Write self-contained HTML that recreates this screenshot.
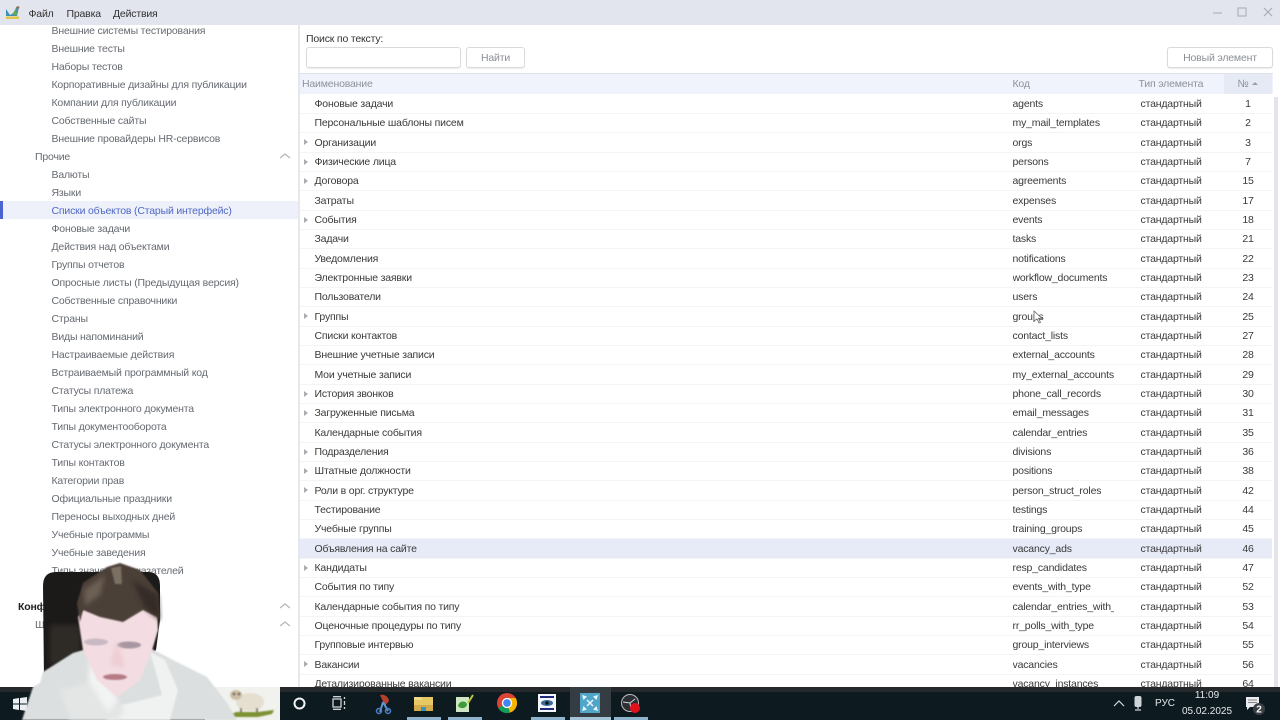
<!DOCTYPE html>
<html lang="ru"><head><meta charset="utf-8"><title>Списки объектов</title>
<style>
html,body{margin:0;padding:0;width:1280px;height:720px;overflow:hidden;background:#fff}
body{position:relative;font-family:"Liberation Sans","DejaVu Sans",sans-serif;font-size:10.5px;letter-spacing:-.18px;color:#333}
.a{position:absolute;white-space:nowrap}
.s{position:absolute;left:51.5px;color:#666b72;white-space:nowrap;line-height:14px;margin-top:.5px}
.r{position:absolute;left:300px;width:972px;height:19.4px;border-bottom:1px solid #f3f4f6;box-sizing:border-box}
.r span{position:absolute;top:2.5px;line-height:14px;white-space:nowrap;color:#3a3a3a}
.n{left:14.5px}.c{left:712.5px;max-width:101px;overflow:hidden}.t{left:840.5px}.d{left:900px;width:96px;text-align:center}
.r i{position:absolute;left:3.5px;top:6px;width:0;height:0;border-left:4px solid #a8adb3;border-top:3px solid transparent;border-bottom:3px solid transparent}
.btn{position:absolute;box-sizing:border-box;border:1px solid #d8dadd;border-radius:3px;background:#fff;color:#8a8e94;text-align:center;box-shadow:0 1px 1px #eee}
svg{position:absolute;overflow:visible}
.k{letter-spacing:0}
</style></head><body>

<!-- title bar -->
<div class="a" style="left:0;top:0;width:1280px;height:25px;background:#e2e5ee"></div>
<svg style="left:4px;top:5px" width="18" height="16"><path d="M2 4l4 6 5-3 1-5 3 0-2 9H2z" fill="#3e8fb8"/><path d="M8 10l4-7 1 7z" fill="#6aa84f"/><circle cx="14" cy="2.500" r="1.400" fill="#b56a3a"/><rect x="2" y="11.500" width="13" height="2.500" fill="#e4c44a"/></svg>
<div class="a" style="left:28.500px;top:7px;line-height:14px;color:#333">Файл</div>
<div class="a" style="left:66.500px;top:7px;line-height:14px;color:#333">Правка</div>
<div class="a" style="left:113px;top:7px;line-height:14px;color:#333">Действия</div>
<svg style="left:1212px;top:6px" width="62" height="12" fill="none" stroke="#a5a9b2" stroke-width="1"><path d="M1 7h9"/><rect x="26" y="2" width="8" height="8"/><path d="M52 2l8 8M60 2l-8 8"/></svg>

<!-- sidebar -->
<div class="a" style="left:298px;top:25px;width:2px;height:662px;background:#e6e8ed"></div>
<div class="s" style="top:23px">Внешние системы тестирования</div>
<div class="s" style="top:41px">Внешние тесты</div>
<div class="s" style="top:59px">Наборы тестов</div>
<div class="s" style="top:77px">Корпоративные дизайны для публикации</div>
<div class="s" style="top:95px">Компании для публикации</div>
<div class="s" style="top:113px">Собственные сайты</div>
<div class="s" style="top:131px">Внешние провайдеры HR-сервисов</div>
<div class="s" style="top:149px;left:35px">Прочие</div>
<svg style="left:279px;top:152px" width="12" height="8" fill="none" stroke="#b5b8bd" stroke-width="1.300"><path d="M1 6l5-4 5 4"/></svg>
<div class="s" style="top:167px">Валюты</div>
<div class="s" style="top:185px">Языки</div>
<div class="a" style="left:0;top:201px;width:298px;height:18px;background:#eef1fa"></div>
<div class="a" style="left:0;top:201px;width:3px;height:18px;background:#4a63d0"></div>
<div class="s" style="top:203px;color:#4f68c4">Списки объектов (Старый интерфейс)</div>
<div class="s" style="top:221px">Фоновые задачи</div>
<div class="s" style="top:239px">Действия над объектами</div>
<div class="s" style="top:257px">Группы отчетов</div>
<div class="s" style="top:275px">Опросные листы (Предыдущая версия)</div>
<div class="s" style="top:293px">Собственные справочники</div>
<div class="s" style="top:311px">Страны</div>
<div class="s" style="top:329px">Виды напоминаний</div>
<div class="s" style="top:347px">Настраиваемые действия</div>
<div class="s" style="top:365px">Встраиваемый программный код</div>
<div class="s" style="top:383px">Статусы платежа</div>
<div class="s" style="top:401px">Типы электронного документа</div>
<div class="s" style="top:419px">Типы документооборота</div>
<div class="s" style="top:437px">Статусы электронного документа</div>
<div class="s" style="top:455px">Типы контактов</div>
<div class="s" style="top:473px">Категории прав</div>
<div class="s" style="top:491px">Официальные праздники</div>
<div class="s" style="top:509px">Переносы выходных дней</div>
<div class="s" style="top:527px">Учебные программы</div>
<div class="s" style="top:545px">Учебные заведения</div>
<div class="s" style="top:563px">Типы значений показателей</div>
<div class="s" style="top:599px;left:18px;color:#222;font-weight:bold">Конфигурация</div>
<div class="s" style="top:617px;left:35px">Шаблоны</div>
<svg style="left:279px;top:602px" width="12" height="8" fill="none" stroke="#b5b8bd" stroke-width="1.300"><path d="M1 6l5-4 5 4"/></svg>
<svg style="left:279px;top:620px" width="12" height="8" fill="none" stroke="#b5b8bd" stroke-width="1.300"><path d="M1 6l5-4 5 4"/></svg>

<!-- search -->
<div class="a" style="left:306px;top:31.500px;line-height:14px;color:#333">Поиск по тексту:</div>
<div class="btn" style="left:306px;top:47px;width:155px;height:21px"></div>
<div class="btn" style="left:466px;top:47px;width:59px;height:21px;line-height:20px">Найти</div>
<div class="btn" style="left:1167px;top:47px;width:106px;height:21px;line-height:20px">Новый элемент</div>

<!-- table header -->
<div class="a" style="left:300px;top:73px;width:973px;height:1px;background:#dfe2e8"></div>
<div class="a" style="left:300px;top:74px;width:973px;height:20px;background:#f0f3fb"></div>
<div class="a" style="left:1224px;top:74px;width:48px;height:20px;background:#e6eaf4"></div>
<div class="a" style="left:302px;top:77px;line-height:14px;color:#8d929b">Наименование</div>
<div class="a" style="left:1012.500px;top:77px;line-height:14px;color:#8d929b">Код</div>
<div class="a" style="left:1138.500px;top:77px;line-height:14px;color:#8d929b">Тип элемента</div>
<div class="a" style="left:1237.500px;top:77px;line-height:14px;color:#8d929b">№</div>
<div class="a" style="left:1252px;top:82px;width:0;height:0;border-left:3.500px solid transparent;border-right:3.500px solid transparent;border-bottom:3.500px solid #9a9ea6"></div>
<div class="a" style="left:1274px;top:97px;width:4px;height:590px;background:#e3e5ea"></div>

<!-- rows -->
<div class="r" style="top:94.500px"><span class="n">Фоновые задачи</span><span class="c">agents</span><span class="t">стандартный</span><span class="d">1</span></div>
<div class="r" style="top:113.800px"><span class="n">Персональные шаблоны писем</span><span class="c">my_mail_templates</span><span class="t">стандартный</span><span class="d">2</span></div>
<div class="r" style="top:133.200px"><i></i><span class="n">Организации</span><span class="c">orgs</span><span class="t">стандартный</span><span class="d">3</span></div>
<div class="r" style="top:152.500px"><i></i><span class="n">Физические лица</span><span class="c">persons</span><span class="t">стандартный</span><span class="d">7</span></div>
<div class="r" style="top:171.800px"><i></i><span class="n">Договора</span><span class="c">agreements</span><span class="t">стандартный</span><span class="d">15</span></div>
<div class="r" style="top:191.200px"><span class="n">Затраты</span><span class="c">expenses</span><span class="t">стандартный</span><span class="d">17</span></div>
<div class="r" style="top:210.500px"><i></i><span class="n">События</span><span class="c">events</span><span class="t">стандартный</span><span class="d">18</span></div>
<div class="r" style="top:229.800px"><span class="n">Задачи</span><span class="c">tasks</span><span class="t">стандартный</span><span class="d">21</span></div>
<div class="r" style="top:249.200px"><span class="n">Уведомления</span><span class="c">notifications</span><span class="t">стандартный</span><span class="d">22</span></div>
<div class="r" style="top:268.500px"><span class="n">Электронные заявки</span><span class="c">workflow_documents</span><span class="t">стандартный</span><span class="d">23</span></div>
<div class="r" style="top:287.800px"><span class="n">Пользователи</span><span class="c">users</span><span class="t">стандартный</span><span class="d">24</span></div>
<div class="r" style="top:307.200px"><i></i><span class="n">Группы</span><span class="c">groups</span><span class="t">стандартный</span><span class="d">25</span></div>
<div class="r" style="top:326.500px"><span class="n">Списки контактов</span><span class="c">contact_lists</span><span class="t">стандартный</span><span class="d">27</span></div>
<div class="r" style="top:345.800px"><span class="n">Внешние учетные записи</span><span class="c">external_accounts</span><span class="t">стандартный</span><span class="d">28</span></div>
<div class="r" style="top:365.200px"><span class="n">Мои учетные записи</span><span class="c">my_external_accounts</span><span class="t">стандартный</span><span class="d">29</span></div>
<div class="r" style="top:384.500px"><i></i><span class="n">История звонков</span><span class="c">phone_call_records</span><span class="t">стандартный</span><span class="d">30</span></div>
<div class="r" style="top:403.800px"><i></i><span class="n">Загруженные письма</span><span class="c">email_messages</span><span class="t">стандартный</span><span class="d">31</span></div>
<div class="r" style="top:423.200px"><span class="n">Календарные события</span><span class="c">calendar_entries</span><span class="t">стандартный</span><span class="d">35</span></div>
<div class="r" style="top:442.500px"><i></i><span class="n">Подразделения</span><span class="c">divisions</span><span class="t">стандартный</span><span class="d">36</span></div>
<div class="r" style="top:461.800px"><i></i><span class="n">Штатные должности</span><span class="c">positions</span><span class="t">стандартный</span><span class="d">38</span></div>
<div class="r" style="top:481.200px"><i></i><span class="n">Роли в орг. структуре</span><span class="c">person_struct_roles</span><span class="t">стандартный</span><span class="d">42</span></div>
<div class="r" style="top:500.500px"><span class="n">Тестирование</span><span class="c">testings</span><span class="t">стандартный</span><span class="d">44</span></div>
<div class="r" style="top:519.800px"><span class="n">Учебные группы</span><span class="c">training_groups</span><span class="t">стандартный</span><span class="d">45</span></div>
<div class="r" style="top:539.200px;background:#e7ebf7"><span class="n">Объявления на сайте</span><span class="c">vacancy_ads</span><span class="t">стандартный</span><span class="d">46</span></div>
<div class="r" style="top:558.500px"><i></i><span class="n">Кандидаты</span><span class="c">resp_candidates</span><span class="t">стандартный</span><span class="d">47</span></div>
<div class="r" style="top:577.800px"><span class="n">События по типу</span><span class="c">events_with_type</span><span class="t">стандартный</span><span class="d">52</span></div>
<div class="r" style="top:597.200px"><span class="n">Календарные события по типу</span><span class="c">calendar_entries_with_type</span><span class="t">стандартный</span><span class="d">53</span></div>
<div class="r" style="top:616.500px"><span class="n">Оценочные процедуры по типу</span><span class="c">rr_polls_with_type</span><span class="t">стандартный</span><span class="d">54</span></div>
<div class="r" style="top:635.800px"><span class="n">Групповые интервью</span><span class="c">group_interviews</span><span class="t">стандартный</span><span class="d">55</span></div>
<div class="r" style="top:655.200px"><i></i><span class="n">Вакансии</span><span class="c">vacancies</span><span class="t">стандартный</span><span class="d">56</span></div>
<div class="r" style="top:674.500px"><span class="n">Детализированные вакансии</span><span class="c">vacancy_instances</span><span class="t">стандартный</span><span class="d">64</span></div>

<!-- mouse cursor -->
<svg style="left:1033px;top:310px" width="10" height="14"><path d="M1 1v10l3-2 2 4 1.500-.7-2-4h3.500z" fill="#fff" stroke="#666" stroke-width=".8"/></svg>

<!-- taskbar -->
<div class="a" style="left:0;top:687px;width:1280px;height:33px;background:#0d1a20"></div>
<div class="a" style="left:0;top:687px;width:1280px;height:5px;background:#26292b"></div>
<svg style="left:13px;top:697px" width="14" height="14" fill="#e8eef2"><path d="M0 2l6-1v5.500H0zM7 1l7-1v6.500H7zM0 7.500h6V13l-6-1zM7 7.500h7V14l-7-1z"/></svg>

<!-- sheep tile -->
<div class="a" style="left:205px;top:687px;width:75px;height:33px;background:#f1f1ee"></div>
<svg style="left:218px;top:687px" width="62" height="33"><defs><filter id="t"><feGaussianBlur stdDeviation=".7"/></filter></defs><g filter="url(#t)"><ellipse cx="32" cy="15" rx="14" ry="9" fill="#e5dfd0"/><ellipse cx="18" cy="8" rx="6" ry="5" fill="#cdbfa6"/><circle cx="16" cy="7" r="1.500" fill="#77705f"/><circle cx="21" cy="7" r="1.500" fill="#77705f"/><rect x="22" y="21" width="2" height="6" fill="#8a7c62"/><rect x="38" y="21" width="2" height="6" fill="#8a7c62"/><path d="M12 28l6-3h22l16-2-2 4-14 3H14z" fill="#7c9233"/></g></svg>

<!-- taskbar icons -->
<svg style="left:293px;top:697px" width="13" height="13" fill="none" stroke="#f2f4f5" stroke-width="2"><circle cx="6.500" cy="6.500" r="5"/></svg>
<svg style="left:332px;top:696px" width="16" height="14" fill="none" stroke="#cfd3d6" stroke-width="1.300"><rect x="1" y="3" width="8" height="8"/><path d="M1 .7h8M1 13.300h8M12.500 1v2M12.500 5v4M12.500 11v2"/></svg>
<svg style="left:373px;top:693px" width="20" height="22"><path d="M7 2a7 7 0 0 1 9 6l-4 5z" fill="#b3402c"/><path d="M10 9l-3 10M10 9l5 9" stroke="#5f93d0" stroke-width="2" fill="none"/><circle cx="6" cy="18" r="2.500" fill="none" stroke="#4a82c8" stroke-width="1.500"/><circle cx="15" cy="18" r="2.500" fill="none" stroke="#4a82c8" stroke-width="1.500"/></svg>
<svg style="left:414px;top:696px" width="20" height="16"><rect x="0" y="1" width="19" height="14" fill="#e8c765"/><rect x="0" y="1" width="8" height="3" fill="#f0d98a"/><rect x="0" y="9" width="19" height="6" fill="#d2ab4a"/><rect x="7" y="11" width="5" height="4" fill="#3d8fc6"/></svg>
<svg style="left:455px;top:694px" width="20" height="19"><rect x="1" y="3" width="13" height="15" fill="#cfe6c3"/><path d="M3 12c1-5 7-6 9-2 0 4-6 6-9 2z" fill="#3f9a3a"/><path d="M13 9l5-8" stroke="#b9c63a" stroke-width="2"/></svg>
<svg style="left:497px;top:693px" width="20" height="20"><circle cx="10" cy="10" r="10" fill="#dc4437"/><path d="M10 10L1.300 15A10 10 0 0 0 13 19.600z" fill="#0f9d58"/><path d="M10 5h8.700A10 10 0 0 1 13 19.600L10 10z" fill="#f4b400"/><circle cx="10" cy="10" r="4.500" fill="#4285f4" stroke="#fff" stroke-width="1.300"/></svg>
<svg style="left:538px;top:694px" width="19" height="19"><rect width="18" height="18" fill="#f5f6fb"/><rect x="2" y="2" width="14" height="2" fill="#1d2a7a"/><rect x="2" y="14" width="14" height="2" fill="#1d2a7a"/><ellipse cx="9" cy="9" rx="6" ry="3" fill="#3a6d96"/><circle cx="9" cy="9" r="1.700" fill="#111"/></svg>
<div class="a" style="left:570px;top:687px;width:41px;height:33px;background:#353c42"></div>
<svg style="left:580px;top:693px" width="20" height="21"><rect width="20" height="20" fill="#4fa6c8"/><path d="M2 2l5 1.500-3.500 3.500zM18 2l-1.500 5L13 3.500zM2 18l1.500-5L7 16.500zM18 18l-5-1.500 3.500-3.500z" fill="#eaf6fa"/><path d="M7 7l6 6M13 7l-6 6" stroke="#eaf6fa" stroke-width="1.500"/></svg>
<svg style="left:621px;top:694px" width="20" height="20"><circle cx="9" cy="9" r="8.500" fill="#2b2f33" stroke="#bbb" stroke-width="1"/><path d="M2 8l7 1 5-4M9 9l1 7" stroke="#d6d6d6" stroke-width="1" fill="none"/><circle cx="14" cy="14" r="5" fill="#e0101c"/></svg>
<div class="a" style="left:407px;top:717px;width:34px;height:3px;background:#8fb3cc"></div>
<div class="a" style="left:448px;top:717px;width:34px;height:3px;background:#8fb3cc"></div>
<div class="a" style="left:531px;top:717px;width:34px;height:3px;background:#8fb3cc"></div>
<div class="a" style="left:570px;top:717px;width:41px;height:3px;background:#a5c3d6"></div>
<div class="a" style="left:614px;top:717px;width:34px;height:3px;background:#8fb3cc"></div>

<!-- tray -->
<svg style="left:1113px;top:699px" width="12" height="8" fill="none" stroke="#d7dadc" stroke-width="1.200"><path d="M1 7l5-5 5 5"/></svg>
<svg style="left:1133px;top:696px" width="10" height="15"><rect x="1.500" y="0" width="7" height="11" rx="2" fill="#cfd4d8"/><path d="M5 11v2M2 14h6" stroke="#cfd4d8" stroke-width="1.200"/></svg>
<div class="a k" style="left:1155px;top:697px;line-height:14px;color:#e6e8ea;font-size:10px">РУС</div>
<div class="a k" style="left:1172px;top:688.500px;width:70px;text-align:center;line-height:14px;color:#e6e8ea;font-size:10px">11:09</div>
<div class="a k" style="left:1172px;top:704.500px;width:70px;text-align:center;line-height:14px;color:#e6e8ea;font-size:10px">05.02.2025</div>
<svg style="left:1245px;top:696px" width="22" height="20"><path d="M1 1h13v10H5l-3 3v-3H1z" fill="#e9ecee"/><path d="M3 4h9M3 6.500h9" stroke="#666" stroke-width=".8"/><circle cx="14" cy="13" r="6" fill="#3a3f44"/><text x="14" y="16.500" font-size="10" font-family="Liberation Sans" font-weight="bold" fill="#fff" text-anchor="middle">2</text></svg>

<!-- webcam overlay -->
<svg style="left:0;top:0" width="1280" height="720" viewBox="0 0 1280 720">
<defs><filter id="b"><feGaussianBlur stdDeviation="2.500"/></filter><filter id="b2"><feGaussianBlur stdDeviation=".9"/></filter></defs>
<path d="M43 586Q43 572 56 572H148Q160 572 160 586V620L156 650 130 680H44Z" fill="#1c1a19"/>
<rect x="50" y="625" width="30" height="40" fill="#2e2b27" filter="url(#b)"/>
<path d="M22 720L33 687 40 683 43 672 73 653 90 648 150 648 173 660 207 677 227 703 237 720Z" fill="#dcdfdf" filter="url(#b2)"/>
<path d="M150 652L162 695 122 705 106 720H170L178 690 165 660Z" fill="#f0f1f1" filter="url(#b2)"/>
<path d="M60 690L100 680 125 710 118 720H70Z" fill="#e4e6e6" filter="url(#b)"/>
<path d="M90 660L118 700 108 712 88 680Z" fill="#f2f3f3" filter="url(#b)"/>
<path d="M78 617L83 650 97 680 117 697 140 680 153 647 158 630 157 610 120 595 90 600Z" fill="#f3dde2" filter="url(#b2)"/>
<ellipse cx="96" cy="642" rx="12" ry="3.500" fill="#c9b9c4" filter="url(#b2)"/>
<ellipse cx="129" cy="645" rx="12" ry="3.500" fill="#a795a2" filter="url(#b2)"/>
<path d="M117 640L110 665 125 668Z" fill="#eccdd3" filter="url(#b)"/>
<ellipse cx="115" cy="677" rx="12" ry="3" fill="#b67a84" filter="url(#b2)"/>
<path d="M77 603L83 583 107 567 120 563 140 570 158 593 160 622 157 617 143 610 123 622 100 617 83 610 80 622Z" fill="#4c3f37" filter="url(#b2)"/>
<path d="M132 580L158 595 160 620 145 608Z" fill="#352b25" filter="url(#b)"/>
<path d="M111 568L121 566 122 584 115 584Z" fill="#7c7064" filter="url(#b2)"/>
<path d="M84 590L105 575 100 595 85 606Z" fill="#6c5e53" filter="url(#b)"/>
</svg>
</body></html>
